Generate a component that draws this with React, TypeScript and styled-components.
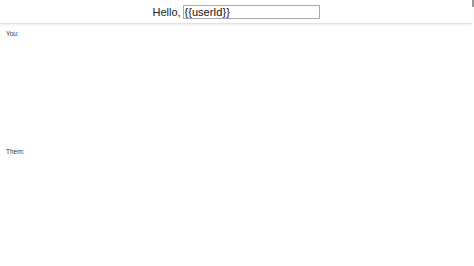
import React from "react";
import styled, { createGlobalStyle } from "styled-components";

const Global = createGlobalStyle`
  html, body { margin: 0; padding: 0; background: #fff; }
  body { font-family: "Liberation Sans", Arial, sans-serif; overflow: hidden; }
`;

const Header = styled.header`
  height: 24px;
  display: flex;
  align-items: center;
  justify-content: center;
  gap: 2px;
  border-bottom: 1px solid #e2e2e2;
  box-shadow: 0 1px 2px rgba(0, 0, 0, 0.08);
  margin-right: 2px;
  box-sizing: border-box;
`;

const Greeting = styled.span`
  font-size: 11px;
  color: #222;
`;

const NameInput = styled.input`
  width: 137px;
  height: 14px;
  box-sizing: border-box;
  border: 1px solid #a9a9a9;
  padding: 0 1px;
  font-family: "Liberation Sans", Arial, sans-serif;
  font-size: 11px;
  color: #111;
  outline: none;
`;

const Section = styled.section`
  height: 118px;
  padding: 6px 6px 0;
  box-sizing: border-box;
`;

const Label = styled.div`
  font-size: 6.5px;
  color: #333;
`;

const Thumb = styled.div`
  position: fixed;
  top: 0;
  right: 0;
  width: 2px;
  height: 7px;
  background: #9a9a9a;
`;

export default function App() {
  return (
    <>
      <Global />
      <Header>
        <Greeting>Hello,</Greeting>
        <NameInput defaultValue="{{userId}}" />
      </Header>
      <Section>
        <Label>You:</Label>
      </Section>
      <Section>
        <Label>Them:</Label>
      </Section>
      <Thumb />
    </>
  );
}
